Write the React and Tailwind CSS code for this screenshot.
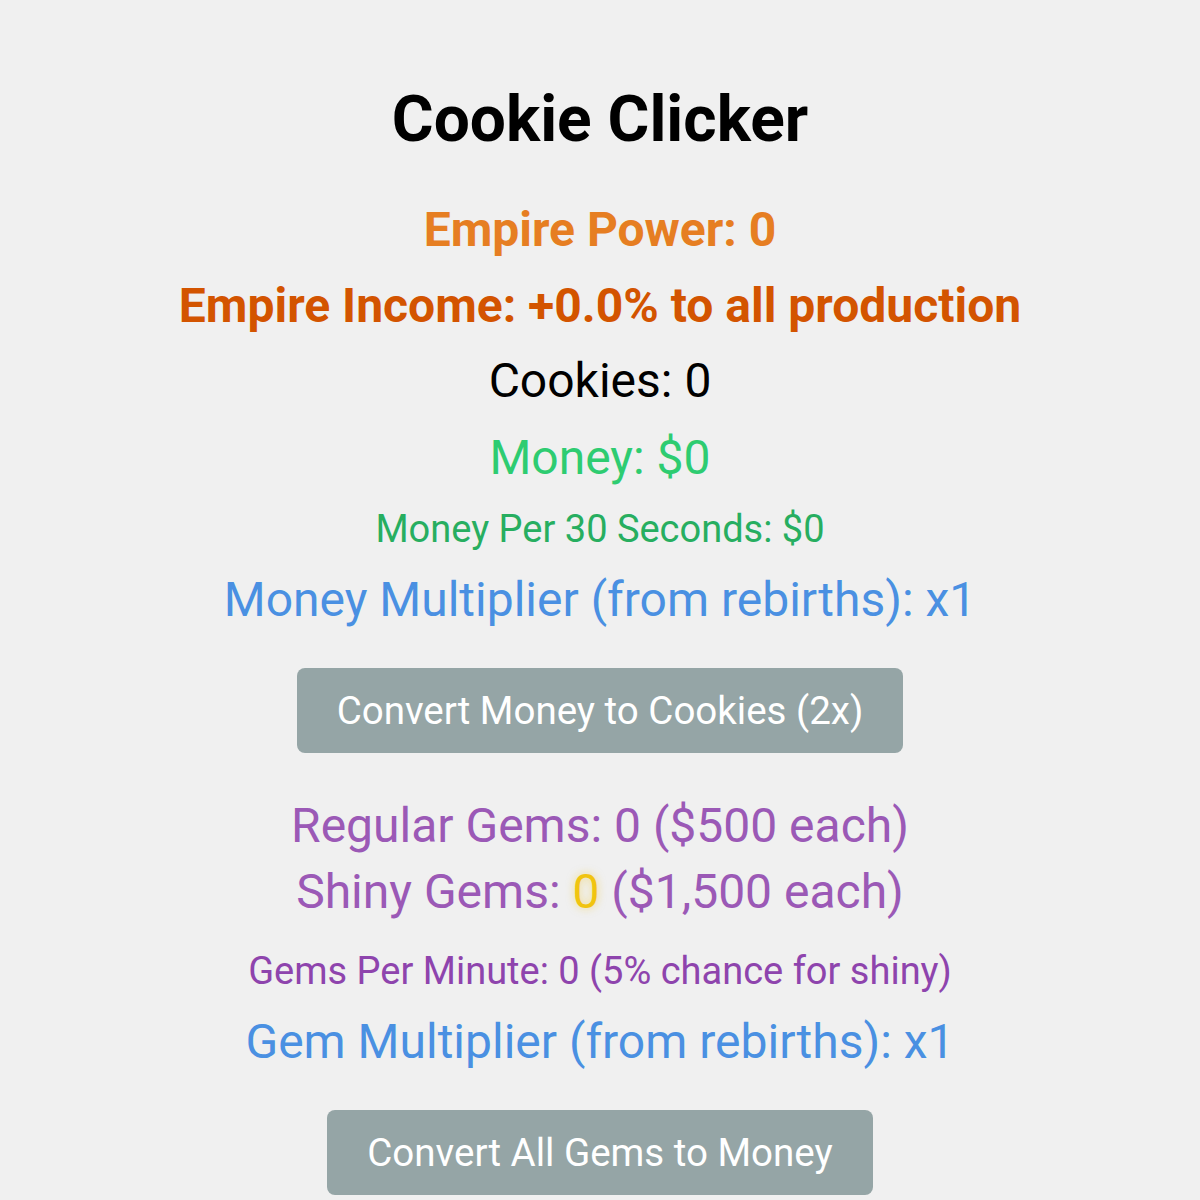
import React from "react";

const App = () => {
  return (
    <div className="min-h-[1200px] bg-[#f0f0f0] text-center font-['Roboto',sans-serif] overflow-hidden">
      <div className="pt-[80px] flex flex-col items-center">
        <h1 className="text-[64px] leading-[80px] font-bold text-black">Cookie Clicker</h1>

        <div className="mt-[40px] text-[48px] leading-[60px] font-bold text-[#e67e22]">Empire Power: 0</div>
        <div className="mt-[16px] text-[48px] leading-[60px] font-bold text-[#d35400]">
          Empire Income: +0.0% to all production
        </div>

        <div className="mt-[17px] text-[48px] leading-[56px] text-black">Cookies: 0</div>
        <div className="mt-[19px] text-[48px] leading-[60px] text-[#2ecc71]">Money: $0</div>
        <div className="mt-[19px] text-[38px] leading-[44px] text-[#27ae60]">Money Per 30 Seconds: $0</div>
        <div className="mt-[19px] text-[48px] leading-[60px] text-[#4a90e2]">
          Money Multiplier (from rebirths): x1
        </div>

        <button className="mt-[38px] h-[85px] px-[40px] rounded-lg bg-[#95a5a6] text-white text-[38.5px]">
          Convert Money to Cookies (2x)
        </button>

        <div className="mt-[43px] text-[48px] leading-[60px] text-[#9b59b6]">Regular Gems: 0 ($500 each)</div>
        <div className="mt-[6px] text-[48px] leading-[60px] text-[#9b59b6]">
          Shiny Gems: <span className="text-[#f1c40f] [text-shadow:0_0_8px_rgba(241,196,15,0.5)]">0</span> ($1,500 each)
        </div>
        <div className="mt-[25px] text-[38px] leading-[48px] text-[#8e44ad]">
          Gems Per Minute: 0 (5% chance for shiny)
        </div>
        <div className="mt-[17px] text-[48px] leading-[60px] text-[#4a90e2]">
          Gem Multiplier (from rebirths): x1
        </div>

        <button className="mt-[38px] h-[85px] px-[40px] rounded-lg bg-[#95a5a6] text-white text-[38.5px]">
          Convert All Gems to Money
        </button>
      </div>
    </div>
  );
};

export default App;
